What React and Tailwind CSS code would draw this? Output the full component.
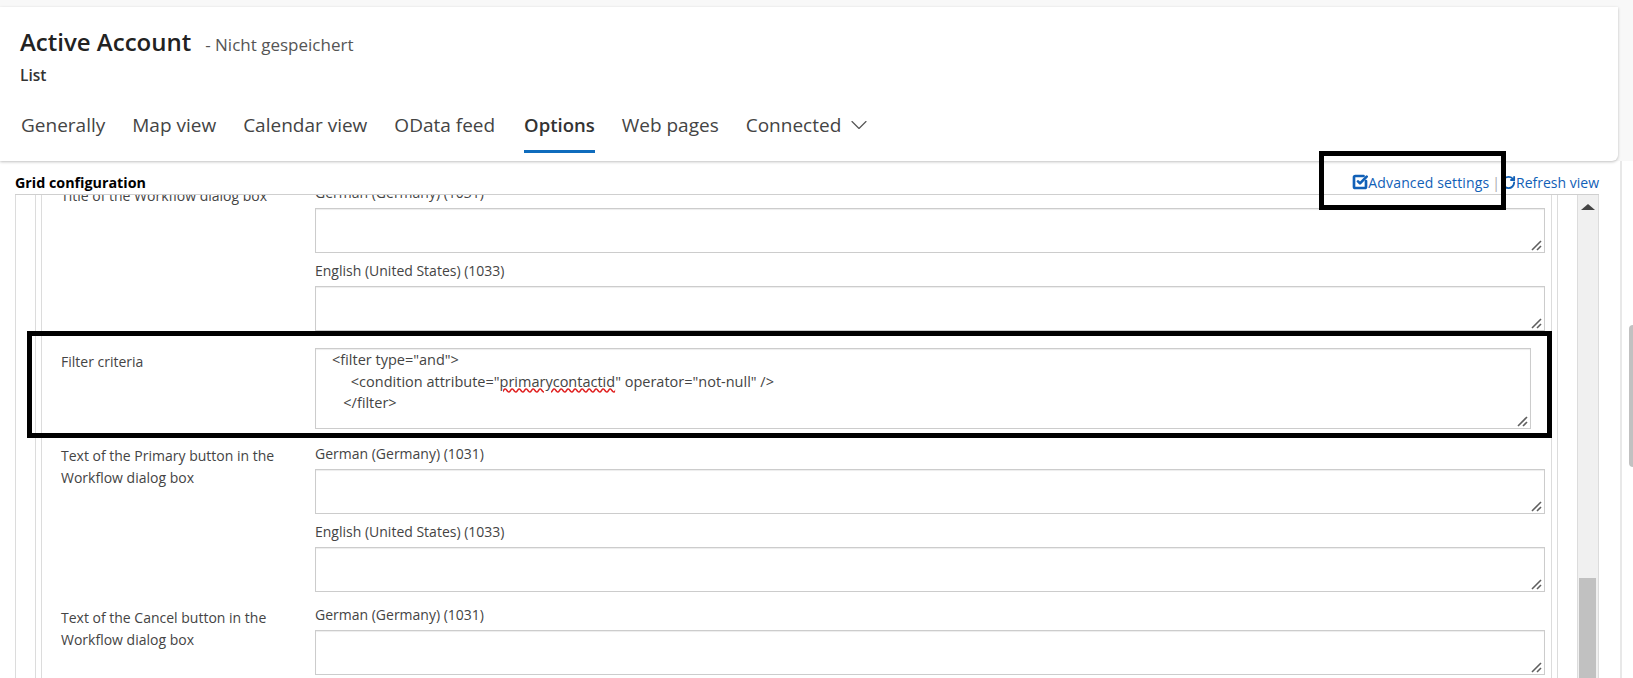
import React from "react";
import { SquareCheckBig, RotateCw, ChevronDown } from "lucide-react";

const font = "font-['Open_Sans','Noto_Sans',sans-serif]";

function Handle() {
  return (
    <svg className="absolute bottom-[1px] right-[2px]" width="12" height="12" viewBox="0 0 12 12" fill="none" stroke="#5f5f5f" strokeWidth="1.6" aria-hidden="true">
      <path d="M2 11 11 2" />
      <path d="M7 11 11 7" />
    </svg>
  );
}

function Box({ className = "", children }) {
  return (
    <div className={"relative border border-[#ccc] bg-white shadow-[inset_0_1px_1px_rgba(0,0,0,0.075)] " + className}>
      {children}
      <Handle />
    </div>
  );
}

function Lang({ label, className = "" }) {
  return (
    <div className={className}>
      <div className="h-5 mb-[5px] text-[14px] leading-5 text-[#444]">{label}</div>
      <Box className="w-[1230px] h-[45px]" />
    </div>
  );
}

function Row({ label, children, className = "", top = "pt-[2px]" }) {
  return (
    <div className={"flex " + className}>
      <div className={"w-[254px] shrink-0 pr-8 text-[14px] leading-[22px] text-[#444] " + top}>{label}</div>
      <div>{children}</div>
    </div>
  );
}

export default function App() {
  const tabs = ["Generally", "Map view", "Calendar view", "OData feed", "Options", "Web pages", "Connected"];
  return (
    <div className={"relative h-[678px] w-[1633px] overflow-hidden bg-[#f8f8f8] " + font}>
      <header className="relative mt-[7px] h-[154px] w-[1618px] rounded-br-md bg-white pl-5 pt-[17px] shadow-[0_1px_3px_rgba(0,0,0,0.25)]">
        <div className="flex items-baseline">
          <h1 className="text-[24px] leading-9 font-semibold text-[#222]">Active Account</h1>
          <span className="ml-[14px] text-[17px] text-[#555]">- Nicht gespeichert</span>
        </div>
        <div className="mt-[5px] text-[15.5px] leading-5 font-semibold text-[#333]">List</div>
        <nav className="ml-[1px] mt-[22px] flex gap-[27px]">
          {tabs.map((t) => (
            <div key={t} className={"relative flex items-center h-[36px] " + (t === "Options" ? "ml-[2px] text-[18.5px] font-semibold text-[#333]" : "text-[19px] text-[#444]")}>
              {t}
              {t === "Connected" && <ChevronDown className="ml-[4px] text-[#555]" size={28} strokeWidth={1} />}
              {t === "Options" && <span className="absolute left-0 right-0 top-[43px] h-[3px] bg-[#0f6cbd]" />}
            </div>
          ))}
        </nav>
      </header>

      <section className="h-[517px] bg-white">
        <div className="flex h-[33px] items-center justify-between pl-[15px] pr-[34px] pt-[11px]">
          <h2 className="text-[14.3px] font-bold text-black">Grid configuration</h2>
          <div className="mb-[2px] flex items-center text-[14px] text-[#1160b7]">
            <SquareCheckBig size={16} strokeWidth={4} />
            <span className="tracking-[0.15px]">Advanced settings</span>
            <span className="ml-[3px] mr-[1px] text-[#aaa]">|</span>
            <RotateCw size={15} strokeWidth={3} />
            <span>Refresh view</span>
          </div>
        </div>
        <div className="ml-[15px] flex h-[484px] w-[1584px] overflow-hidden border-t border-[#cfcfcf]">
          <div className="w-[1562px] border-l border-[#dcdcdc] pl-[19px] pr-[19px]">
            <div className="h-full border-x border-[#dcdcdc] px-[5px]">
              <div className="flow-root h-full border-x border-[#dcdcdc] pl-[19px]">
                <div className="-mt-[12px]">
                  <Row label="Title of the Workflow dialog box">
                    <Lang label="German (Germany) (1031)" />
                    <Lang label="English (United States) (1033)" className="mt-[8px]" />
                  </Row>
                  <Row label="Filter criteria" className="mt-[17px]" top="pt-[3px]">
                    <Box className="w-[1216px] h-[81px] whitespace-pre pl-[16px] text-[14.5px] leading-[21.5px] text-[#444]">
                      {'<filter type="and">\n     <condition attribute="'}
                      <span className="underline decoration-wavy decoration-[#e02020]">primarycontactid</span>
                      {'" operator="not-null" />\n   </filter>'}
                    </Box>
                  </Row>
                  <Row label="Text of the Primary button in the Workflow dialog box" className="mt-[15px]" top="pt-[1px]">
                    <Lang label="German (Germany) (1031)" />
                    <Lang label="English (United States) (1033)" className="mt-[8px]" />
                  </Row>
                  <Row label="Text of the Cancel button in the Workflow dialog box" className="mt-[13px]" top="pt-[2px]">
                    <Lang label="German (Germany) (1031)" />
                  </Row>
                </div>
              </div>
            </div>
          </div>
          <div className="relative w-[22px] border-x border-[#dcdcdc] bg-[#f0f0f0]">
            <span className="absolute left-[3px] top-[9px] h-0 w-0 border-x-[7px] border-b-[6px] border-x-transparent border-b-[#444]" />
            <span className="absolute left-[1px] top-[383px] h-[101px] w-[17px] bg-[#c1c1c1]" />
          </div>
        </div>
      </section>

      <span className="absolute left-[1319px] top-[151px] h-[59px] w-[187px] border-[5px] border-black" />
      <span className="absolute left-[27px] top-[331px] h-[107px] w-[1525px] border-[5px] border-black" />
      <span className="absolute left-[1620px] top-[161px] h-[517px] w-[2px] bg-[#e8e8e8]" />
      <span className="absolute left-[1629px] top-[325px] h-[142px] w-[4px] rounded-l bg-[#c1c1c1]" />
    </div>
  );
}
